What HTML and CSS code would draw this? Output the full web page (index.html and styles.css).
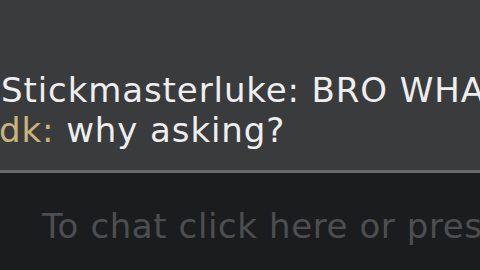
FILE: index.html
```html
<!DOCTYPE html>
<html lang="en">
<head>
    <meta charset="UTF-8">
    <title>Chat</title>
    <link rel="stylesheet" href="styles.css">
</head>
<body>
    <div class="chat">
        <div class="chat-log">
            <div class="message"><span class="author">Stickmasterluke:</span> BRO WHAT</div>
            <div class="message second"><span class="author gold">dk:</span> why asking?</div>
        </div>
        <div class="chat-input">To chat click here or press</div>
    </div>
</body>
</html>
```

FILE: styles.css
```css
* {
    margin: 0;
    padding: 0;
    box-sizing: border-box;
}

body {
    font-family: "DejaVu Sans", sans-serif;
    background: #1b1c1e;
    width: 480px;
    height: 270px;
    overflow: hidden;
}

.chat {
    display: flex;
    flex-direction: column;
    height: 270px;
    overflow: hidden;
}

.chat-log {
    background: #3a3b3d;
    height: 173px;
    padding: 70px 0 0 1px;
    border-bottom: 3px solid #6a6b6d;
    overflow: hidden;
}

.message {
    color: #eeeeee;
    font-size: 34px;
    line-height: 40px;
    white-space: nowrap;
    letter-spacing: 0.9px;
}

.message.second {
    margin-left: -2px;
}

.author.gold {
    color: #cbb47c;
}

.chat-input {
    flex: 1;
    background: #1b1c1e;
    color: #4d4e50;
    font-size: 34px;
    padding: 33px 0 0 42px;
    white-space: nowrap;
    letter-spacing: 0.6px;
    overflow: hidden;
}
```
